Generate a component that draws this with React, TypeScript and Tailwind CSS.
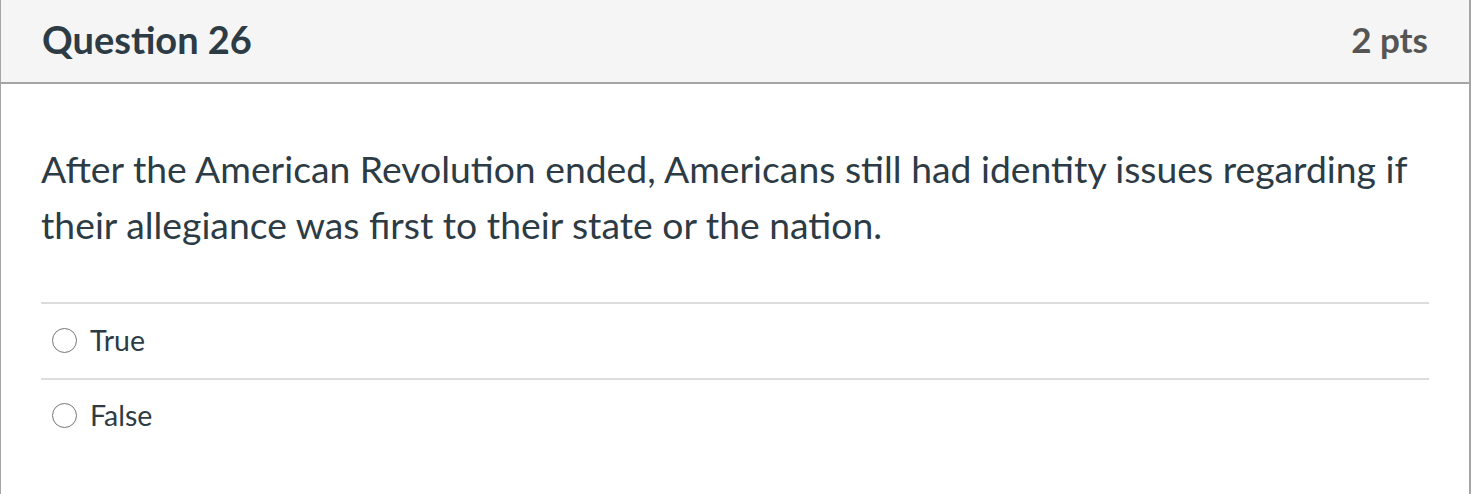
import React from "react";

function Radio() {
  return (
    <span className="block w-[25px] h-[25px] rounded-full border-[1.5px] border-[#777777] bg-white shrink-0" />
  );
}

export default function App() {
  return (
    <div className="w-[1479px] h-[494px] bg-white overflow-hidden" style={{ fontFamily: "Lato, 'Noto Sans', sans-serif" }}>
      <div className="w-[1471px] h-[494px] border-l border-r-2 border-[#a5a5a5] flex flex-col">
        <div className="h-[84px] bg-[#f5f5f5] border-b-2 border-[#a5a5a5] flex items-center justify-between pl-[41px] pr-[41px] pb-[4px]">
          <div className="text-[38px] font-bold text-[#2d3b45] leading-none">Question 26</div>
          <div className="text-[35px] font-bold text-[#555555] leading-none">2 pts</div>
        </div>
        <div className="px-[40px] pt-[57px]">
          <div className="text-[37.3px] leading-[56px] text-[#2d3b45]">
            After the American Revolution ended, Americans still had identity issues regarding if their allegiance was first to their state or the nation.
          </div>
          <div className="mt-[49px] border-t-2 border-[#dcdcdc]">
            <div className="h-[74px] flex items-center gap-[13px] pl-[11px] pb-[2px]">
              <Radio />
              <span className="text-[28.5px] text-[#2d3b45]">True</span>
            </div>
            <div className="h-[77px] border-t-2 border-[#dcdcdc] flex items-center gap-[13px] pl-[11px] pb-[4px]">
              <Radio />
              <span className="text-[28.5px] text-[#2d3b45]">False</span>
            </div>
          </div>
        </div>
      </div>
    </div>
  );
}
